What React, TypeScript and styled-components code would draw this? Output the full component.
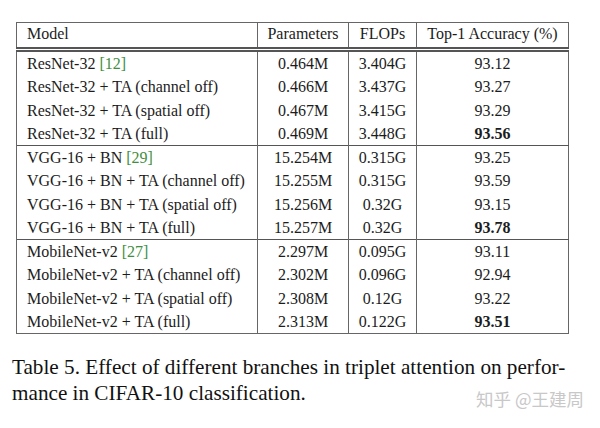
import React from 'react'
import styled, {createGlobalStyle} from 'styled-components'

const GlobalStyle = createGlobalStyle`
  html, body {
    margin: 0;
    padding: 0;
    background: #fff;
  }
`

type Row = {model: string; cite?: string; params: string; flops: string; acc: string; best?: boolean}

const groups: Row[][] = [
  [
    {model: 'ResNet-32', cite: '12', params: '0.464M', flops: '3.404G', acc: '93.12'},
    {model: 'ResNet-32 + TA (channel off)', params: '0.466M', flops: '3.437G', acc: '93.27'},
    {model: 'ResNet-32 + TA (spatial off)', params: '0.467M', flops: '3.415G', acc: '93.29'},
    {model: 'ResNet-32 + TA (full)', params: '0.469M', flops: '3.448G', acc: '93.56', best: true},
  ],
  [
    {model: 'VGG-16 + BN', cite: '29', params: '15.254M', flops: '0.315G', acc: '93.25'},
    {model: 'VGG-16 + BN + TA (channel off)', params: '15.255M', flops: '0.315G', acc: '93.59'},
    {model: 'VGG-16 + BN + TA (spatial off)', params: '15.256M', flops: '0.32G', acc: '93.15'},
    {model: 'VGG-16 + BN + TA (full)', params: '15.257M', flops: '0.32G', acc: '93.78', best: true},
  ],
  [
    {model: 'MobileNet-v2', cite: '27', params: '2.297M', flops: '0.095G', acc: '93.11'},
    {model: 'MobileNet-v2 + TA (channel off)', params: '2.302M', flops: '0.096G', acc: '92.94'},
    {model: 'MobileNet-v2 + TA (spatial off)', params: '2.308M', flops: '0.12G', acc: '93.22'},
    {model: 'MobileNet-v2 + TA (full)', params: '2.313M', flops: '0.122G', acc: '93.51', best: true},
  ],
]

const App: React.FC = () => {
  return (
    <>
      <GlobalStyle />
      <Page>
        <Table>
          <colgroup>
            <col style={{width: 241}} />
            <col style={{width: 91}} />
            <col style={{width: 68}} />
            <col style={{width: 152}} />
          </colgroup>
          <thead>
            <tr>
              <HeadCell $left>Model</HeadCell>
              <HeadCell>Parameters</HeadCell>
              <HeadCell>FLOPs</HeadCell>
              <HeadCell>Top-1 Accuracy (%)</HeadCell>
            </tr>
          </thead>
          {groups.map((g, gi) => (
            <Group key={gi}>
              {g.map((r) => (
                <tr key={r.model}>
                  <Cell $left>
                    {r.model}
                    {r.cite && (
                      <>
                        {' '}
                        <Cite>[{r.cite}]</Cite>
                      </>
                    )}
                  </Cell>
                  <Cell>{r.params}</Cell>
                  <Cell>{r.flops}</Cell>
                  <Cell $bold={r.best}>{r.acc}</Cell>
                </tr>
              ))}
            </Group>
          ))}
        </Table>
        <Caption>
          <CaptionLine>Table 5. Effect of different branches in triplet attention on perfor-</CaptionLine>
          <CaptionLine>
            <span>mance in CIFAR-10 classification.</span>
            <Watermark>知乎 @王建周</Watermark>
          </CaptionLine>
        </Caption>
      </Page>
    </>
  )
}

const Page = styled.div`
  width: 600px;
  height: 428px;
  padding: 22px 0 0 16px;
  box-sizing: border-box;
  font-family: "Liberation Serif", "Times New Roman", serif;
  color: #1c1c1c;
  overflow: hidden;
`

const Table = styled.table`
  width: 553px;
  table-layout: fixed;
  border-collapse: collapse;
  border: 1px solid #666;
  font-size: 16px;
`

const Group = styled.tbody`
  border-top: 1px solid #555;
  tr {
    height: 23.5px;
  }
`

const HeadCell = styled.th<{$left?: boolean}>`
  height: 27px;
  padding: 0 0 2px ${p => (p.$left ? '10px' : '0')};
  font-weight: normal;
  text-align: ${p => (p.$left ? 'left' : 'center')};
  border-left: 1px solid #666;
  border-bottom: 5px double #555;
  box-sizing: border-box;
`

const Cell = styled.td<{$left?: boolean; $bold?: boolean}>`
  padding: 0 0 0 ${p => (p.$left ? '10px' : '0')};
  text-align: ${p => (p.$left ? 'left' : 'center')};
  font-weight: ${p => (p.$bold ? 'bold' : 'normal')};
  border-left: 1px solid #666;
  white-space: nowrap;
  line-height: 23px;
`

const Cite = styled.span`
  color: #3f8f3f;
`

const Caption = styled.div`
  width: 556px;
  margin: 21px 0 0 -4px;
  font-size: 21.2px;
  line-height: 25px;
  color: #111;
`

const CaptionLine = styled.div`
  display: flex;
  justify-content: space-between;
  align-items: baseline;
  white-space: nowrap;
`

const Watermark = styled.span`
  font-family: "Noto Sans CJK SC", sans-serif;
  font-size: 17.5px;
  color: #c8c8c8;
  margin-right: -16px;
  position: relative;
  top: 6px;
`

export default App
